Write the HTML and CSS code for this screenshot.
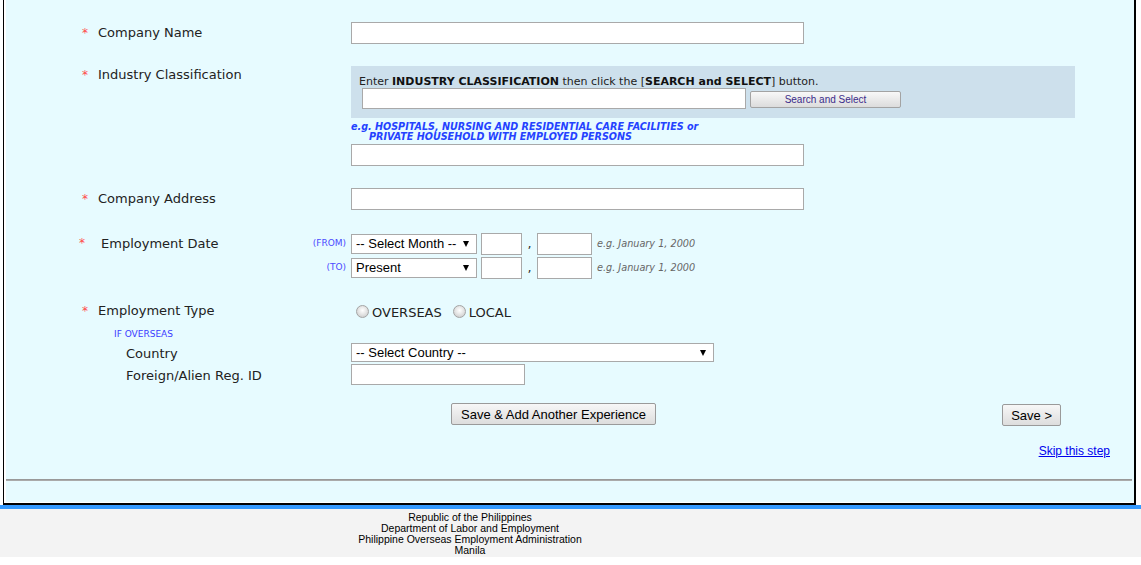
FILE: index.html
```html
<!DOCTYPE html>
<html>
<head>
<meta charset="utf-8">
<title>Work Experience</title>
<link rel="stylesheet" href="styles.css">
</head>
<body>
<div class="frame">
  <div class="sheet">
    <div class="row r-name">
      <div class="lab"><span class="req">*</span><span>Company Name</span></div>
      <input class="txt w-wide" type="text">
    </div>

    <div class="row r-ind">
      <div class="lab"><span class="req">*</span><span>Industry Classification</span></div>
      <div class="fld">
        <div class="search-box">
          <div class="search-hint">Enter <b>INDUSTRY CLASSIFICATION</b> then click the [<b>SEARCH and SELECT</b>] button.</div>
          <div class="search-line">
            <input class="txt search-in" type="text">
            <button class="btn-small" type="button">Search and Select</button>
          </div>
        </div>
        <div class="eg">
          <div>e.g. HOSPITALS, NURSING AND RESIDENTIAL CARE FACILITIES or</div>
          <div class="eg2">PRIVATE HOUSEHOLD WITH EMPLOYED PERSONS</div>
        </div>
        <input class="txt w-wide" type="text">
      </div>
    </div>

    <div class="row r-addr">
      <div class="lab"><span class="req">*</span><span>Company Address</span></div>
      <input class="txt w-wide" type="text">
    </div>

    <div class="row r-date">
      <div class="lab lab-date"><span class="req req-date">*</span><span>Employment Date</span></div>
      <div class="date-grid">
        <span class="tag">(FROM)</span>
        <div class="date-line">
          <span class="sel"><select class="sel-month"><option>-- Select Month --</option></select></span>
          <input class="txt day" type="text">
          <span class="comma">,</span>
          <input class="txt year" type="text">
          <span class="hint">e.g. January 1, 2000</span>
        </div>
        <span class="tag">(TO)</span>
        <div class="date-line">
          <span class="sel"><select class="sel-month"><option>Present</option></select></span>
          <input class="txt day" type="text">
          <span class="comma">,</span>
          <input class="txt year" type="text">
          <span class="hint">e.g. January 1, 2000</span>
        </div>
      </div>
    </div>

    <div class="row r-type">
      <div class="lab"><span class="req">*</span><span>Employment Type</span></div>
      <div class="radios">
        <label class="radio"><input type="radio" name="etype">OVERSEAS</label>
        <label class="radio"><input type="radio" name="etype">LOCAL</label>
      </div>
    </div>

    <div class="if-over">IF OVERSEAS</div>

    <div class="row r-country">
      <div class="lab lab-sub">Country</div>
      <span class="sel"><select class="sel-country"><option>-- Select Country --</option></select></span>
    </div>

    <div class="row r-reg">
      <div class="lab lab-sub">Foreign/Alien Reg. ID</div>
      <input class="txt reg" type="text">
    </div>

    <div class="actions">
      <button class="btn" type="button">Save &amp; Add Another Experience</button>
      <button class="btn btn-save" type="button">Save &gt;</button>
    </div>

    <div class="skip"><a href="#">Skip this step</a></div>

    <div class="rule"></div>
  </div>
</div>
<div class="bluebar"></div>
<div class="foot">
  <div class="foot-in">
    <div>Republic of the Philippines</div>
    <div>Department of Labor and Employment</div>
    <div>Philippine Overseas Employment Administration</div>
    <div>Manila</div>
  </div>
</div>
</body>
</html>
```
FILE: styles.css
```css
html, body {
  margin: 0;
  padding: 0;
  background: #ffffff;
}
body {
  font-family: "DejaVu Sans", Verdana, sans-serif;
  color: #222222;
}
.frame {
  margin-left: 3px;
  width: 1128px;
  padding: 0 0 1px 2px;
  border-left: 1px solid #000;
  border-right: 2px solid #000;
  border-bottom: 2px solid #000;
  background: #ffffff;
}
.sheet {
  background: #e7fbff;
  padding: 22px 0 21px 0;
}
.row {
  display: flex;
  align-items: center;
}
.lab {
  flex: none;
  width: 345px;
  box-sizing: border-box;
  padding-left: 76px;
  display: flex;
  font-size: 13px;
  line-height: 16px;
}
.req {
  width: 16px;
  color: #ff4a4a;
  font-size: 12px;
}
.txt {
  box-sizing: border-box;
  margin: 0;
  padding: 0 3px;
  height: 22px;
  border: 1px solid #a9a9a9;
  border-radius: 0;
  background: #ffffff;
  font: 13px "Liberation Sans", Arial, sans-serif;
  outline: none;
}
.w-wide {
  width: 453px;
}

/* industry */
.r-ind {
  align-items: flex-start;
  margin-top: 22px;
}
.r-ind .lab {
  padding-top: 1px;
}
.fld {
  display: flex;
  flex-direction: column;
  align-items: flex-start;
}
.search-box {
  width: 724px;
  height: 52px;
  box-sizing: border-box;
  padding: 8px 0 0 8px;
  background: #cde0ec;
}
.search-hint {
  font-size: 11px;
  line-height: 14px;
  color: #222;
  padding-top: 1px;
  height: 13px;
}
.search-hint b {
  color: #111;
}
.search-line {
  display: flex;
  align-items: center;
  padding-left: 3px;
}
.search-in {
  width: 384px;
  height: 21px;
}
.btn-small {
  margin: 2px 0 0 4px;
  width: 151px;
  height: 17px;
  padding: 0;
  border: 1px solid #a3a3a3;
  border-radius: 2px;
  background: linear-gradient(#f8f8f8, #dcdcdc);
  color: #3b2c8a;
  font: 10px "Liberation Sans", Arial, sans-serif;
}
.eg {
  margin: 4px 0 2px 0;
  font-size: 9.6px;
  line-height: 10px;
  font-weight: bold;
  font-style: italic;
  color: #2442ff;
}
.eg div {
  height: 10px;
}
.eg2 {
  padding-left: 18px;
}

.r-name {
  height: 22px;
}
.r-addr {
  margin-top: 22px;
  height: 22px;
}

/* date */
.r-date {
  margin-top: 23px;
  align-items: flex-start;
}
.lab-date {
  width: 300px;
  padding-left: 73px;
  line-height: 21px;
}
.req-date {
  width: 22px;
}
.date-grid {
  display: grid;
  grid-template-columns: 45px auto;
  row-gap: 3px;
  align-items: center;
}
.tag {
  text-align: right;
  padding-right: 5px;
  font-size: 9px;
  color: #4a4aff;
  line-height: 21px;
}
.date-line {
  display: flex;
  align-items: center;
  height: 21px;
}
.sel {
  position: relative;
  display: inline-block;
  line-height: 0;
}
.sel::after {
  content: "";
  position: absolute;
  right: 8px;
  top: 50%;
  margin-top: -3px;
  border-left: 3.5px solid transparent;
  border-right: 3.5px solid transparent;
  border-top: 6px solid #000;
  pointer-events: none;
}
select {
  -webkit-appearance: none;
  appearance: none;
  margin: 0;
  box-sizing: border-box;
  border: 1px solid #a9a9a9;
  border-radius: 0;
  background: #ffffff;
  color: #000;
  font: 13px "Liberation Sans", Arial, sans-serif;
  padding: 0 0 0 4px;
  outline: none;
}
.sel-month {
  width: 126px;
  height: 20px;
}
.day {
  margin-left: 4px;
  width: 41px;
  height: 22px;
}
.comma {
  width: 15px;
  text-align: center;
  font-size: 13px;
  color: #333;
}
.year {
  width: 55px;
  height: 22px;
}
.hint {
  margin-left: 5px;
  font-size: 9.7px;
  font-style: italic;
  color: #666;
}

/* type */
.r-type {
  margin-top: 25px;
  height: 16px;
}
.radios {
  display: flex;
  align-items: center;
  font-size: 13px;
  color: #222;
  padding-top: 3px;
}
.radio {
  display: inline-flex;
  align-items: center;
  margin-right: 6px;
}
.radio input {
  -webkit-appearance: none;
  appearance: none;
  width: 13px;
  height: 13px;
  margin: -2px 3px 0 5px;
  border: 1px solid #a4a4a4;
  border-radius: 50%;
  box-sizing: border-box;
  background: radial-gradient(circle at 50% 40%, #ffffff 0%, #e6e6e6 45%, #c4c4c4 100%);
}
.if-over {
  margin: 9px 0 3px 108px;
  font-size: 9px;
  line-height: 12px;
  color: #3a3aff;
}
.lab-sub {
  padding-left: 120px;
  padding-top: 3px;
}
.r-country {
  height: 19px;
}
.sel-country {
  width: 363px;
  height: 19px;
}
.r-reg {
  margin-top: 2px;
  height: 21px;
}
.reg {
  width: 174px;
  height: 21px;
}

/* actions */
.actions {
  display: flex;
  align-items: flex-start;
  justify-content: space-between;
  margin-top: 18px;
  padding: 0 73px 0 445px;
}
.btn {
  height: 22px;
  margin: 0;
  padding: 0 9px;
  border: 1px solid #9a9a9a;
  border-radius: 2px;
  background: linear-gradient(#f7f7f7, #dddddd);
  color: #000;
  font: 13px "Liberation Sans", Arial, sans-serif;
}
.btn-save {
  margin-top: 1px;
  padding: 0 8px;
}
.skip {
  margin-top: 18px;
  text-align: right;
  padding-right: 24px;
  font: 12px/14px "Liberation Sans", Arial, sans-serif;
}
.skip a {
  color: #0000ee;
  text-decoration: underline;
}
.rule {
  margin: 21px 2px 0 0;
  height: 0;
  border-top: 1px solid #999999;
  border-bottom: 1px solid #aaaaaa;
}

/* footer */
.bluebar {
  height: 4px;
  background: #3399ff;
}
.foot {
  background: #f3f3f3;
  padding: 3px 0 1px 0;
}
.foot-in {
  width: 940px;
  text-align: center;
  font: 10.5px/11px "Liberation Sans", Arial, sans-serif;
  color: #000;
}
```
